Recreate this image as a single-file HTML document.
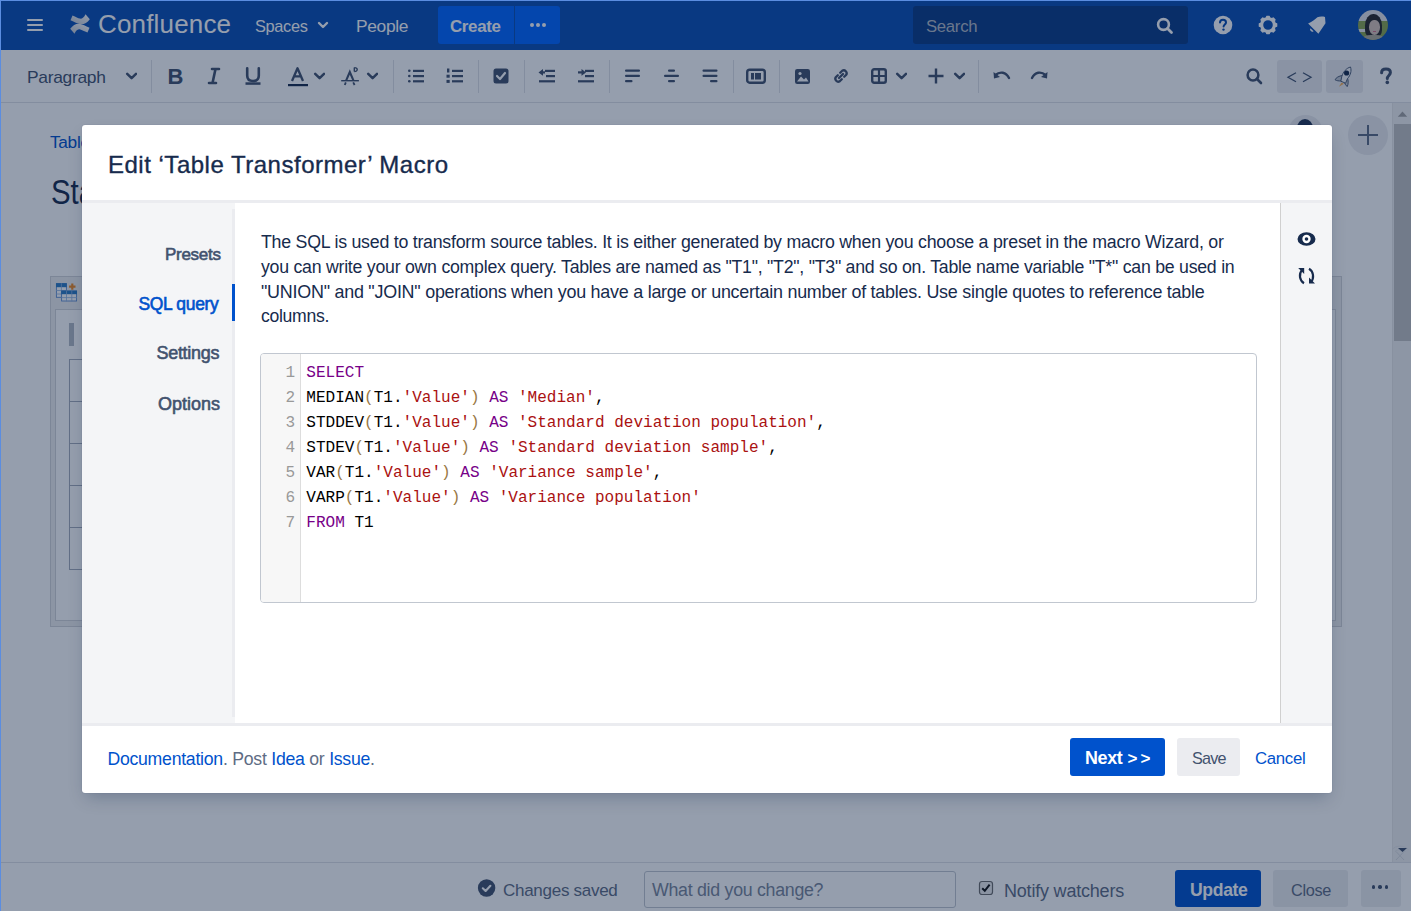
<!DOCTYPE html>
<html><head><meta charset="utf-8"><style>
html,body{margin:0;padding:0;width:1411px;height:911px;overflow:hidden;background:#fff;}
body{position:relative;font-family:"Liberation Sans", sans-serif;}
.t{position:absolute;white-space:pre;}
.r{position:absolute;box-sizing:border-box;}
</style></head><body>
<div class="r" style="left:0px;top:0px;width:1411px;height:50px;background:#0a4eb4;"></div>
<div class="r" style="left:27px;top:18.6px;width:16px;height:2.6px;background:#fff;border-radius:1.3px;"></div>
<div class="r" style="left:27px;top:23.6px;width:16px;height:2.6px;background:#fff;border-radius:1.3px;"></div>
<div class="r" style="left:27px;top:28.6px;width:16px;height:2.6px;background:#fff;border-radius:1.3px;"></div>
<svg class="r" style="left:69px;top:13px" width="22" height="22" viewBox="0 0 22 22"><defs><linearGradient id="lg1" x1="0" y1="1" x2="1" y2="0"><stop offset="0" stop-color="#c1c7d0"/><stop offset="1" stop-color="#fff"/></linearGradient></defs><path d="M1.2 15.8 C4 12 7.5 10 11 10.8 C13.5 11.4 16.5 13 20.5 14.8 L18.5 19.5 C15 18 13 16.8 11.2 16.4 C9 16 7 17.5 5.5 20.8 Z" fill="url(#lg1)"/><path d="M20.8 6.2 C18 10 14.5 12 11 11.2 C8.5 10.6 5.5 9 1.5 7.2 L3.5 2.5 C7 4 9 5.2 10.8 5.6 C13 6 15 4.5 16.5 1.2 Z" fill="url(#lg1)"/></svg>
<div class="t" style="left:98px;top:9px;font-family:'Liberation Sans', sans-serif;font-size:26px;line-height:30px;color:#fff;font-weight:400;letter-spacing:0.169px;">Confluence</div>
<div class="t" style="left:255px;top:17px;font-family:'Liberation Sans', sans-serif;font-size:16.38px;line-height:18px;color:#fff;font-weight:400;letter-spacing:-0.328px;">Spaces</div>
<svg class="r" style="left:316px;top:18px" width="14" height="14" viewBox="0 0 14 14"><path d="M3 5 L7 9 L11 5" stroke="#fff" stroke-width="2.4" fill="none" stroke-linecap="round" stroke-linejoin="round"/></svg>
<div class="t" style="left:356px;top:16px;font-family:'Liberation Sans', sans-serif;font-size:17.36px;line-height:20px;color:#fff;font-weight:400;letter-spacing:-0.319px;">People</div>
<div class="r" style="left:438px;top:6px;width:76px;height:38px;background:#0065ff;border-radius:3px 0 0 3px;"></div>
<div class="r" style="left:515px;top:6px;width:45px;height:38px;background:#0065ff;border-radius:0 3px 3px 0;"></div>
<div class="t" style="left:450px;top:17px;font-family:'Liberation Sans', sans-serif;font-size:16.89px;line-height:19px;color:#fff;font-weight:700;letter-spacing:-0.315px;">Create</div>
<div class="r" style="left:529.7px;top:23px;width:4px;height:4px;background:#fff;border-radius:50%;"></div>
<div class="r" style="left:535.9px;top:23px;width:4px;height:4px;background:#fff;border-radius:50%;"></div>
<div class="r" style="left:542.1px;top:23px;width:4px;height:4px;background:#fff;border-radius:50%;"></div>
<div class="r" style="left:913px;top:6px;width:275px;height:38px;background:rgba(9,30,66,0.4);border-radius:3px;"></div>
<div class="t" style="left:926px;top:17px;font-family:'Liberation Sans', sans-serif;font-size:16.76px;line-height:19px;color:#b3bac5;font-weight:400;letter-spacing:-0.313px;">Search</div>
<svg class="r" style="left:1153px;top:14px" width="24" height="24" viewBox="0 0 24 24"><circle cx="10.5" cy="10.5" r="5.4" stroke="#fff" stroke-width="2.6" fill="none"/><path d="M14.5 14.5 L18.5 18.5" stroke="#fff" stroke-width="2.8" stroke-linecap="round"/></svg>
<svg class="r" style="left:1212px;top:14px" width="22" height="22" viewBox="0 0 22 22"><circle cx="11" cy="11" r="9.3" fill="#fff"/><path d="M8 8.6 C8 6.8 9.3 5.8 11 5.8 C12.8 5.8 14 6.9 14 8.4 C14 10.4 11.6 10.6 11.6 12.6" stroke="#0049b0" stroke-width="2" fill="none" stroke-linecap="round"/><circle cx="11.5" cy="15.6" r="1.2" fill="#0049b0"/></svg>
<svg class="r" style="left:1257px;top:14px" width="22" height="22" viewBox="0 0 22 22"><g transform="translate(11 11)"><circle r="6.4" stroke="#fff" stroke-width="3.2" fill="none"/><rect x="-2" y="-9.3" width="4" height="3.5" rx="0.8" fill="#fff" transform="rotate(0)"/><rect x="-2" y="-9.3" width="4" height="3.5" rx="0.8" fill="#fff" transform="rotate(45)"/><rect x="-2" y="-9.3" width="4" height="3.5" rx="0.8" fill="#fff" transform="rotate(90)"/><rect x="-2" y="-9.3" width="4" height="3.5" rx="0.8" fill="#fff" transform="rotate(135)"/><rect x="-2" y="-9.3" width="4" height="3.5" rx="0.8" fill="#fff" transform="rotate(180)"/><rect x="-2" y="-9.3" width="4" height="3.5" rx="0.8" fill="#fff" transform="rotate(225)"/><rect x="-2" y="-9.3" width="4" height="3.5" rx="0.8" fill="#fff" transform="rotate(270)"/><rect x="-2" y="-9.3" width="4" height="3.5" rx="0.8" fill="#fff" transform="rotate(315)"/></g></svg>
<svg class="r" style="left:1306px;top:14px" width="22" height="22" viewBox="0 0 22 22"><path d="M2.1 9.5 C5.5 7.8 8.8 5.6 11.4 3.2 C13.6 2.2 16.8 2.3 19 2.9 L19.5 9.2 L12.4 19.7 Z" fill="#fff"/><path d="M4.4 14.3 A2.2 2.2 0 0 0 7.6 17.2 Z" fill="#fff"/></svg>
<div class="r" style="left:1358px;top:10px;width:30px;height:30px;border-radius:50%;overflow:hidden;background:linear-gradient(#e4e5e8 0 38%, #8ba54e 38% 100%);"><div class="r" style="left:0;top:19px;width:8px;height:3px;background:#e8e8e8;"></div><div class="r" style="left:7px;top:4px;width:17px;height:23px;border-radius:50% 50% 30% 30%;background:#2a2828;"></div><div class="r" style="left:10.5px;top:9.5px;width:11px;height:15px;border-radius:45% 45% 50% 50%;background:#d8c4b8;"></div><div class="r" style="left:14.5px;top:20.5px;width:3px;height:1.2px;background:#d07088;"></div><div class="r" style="left:4px;top:25px;width:23px;height:10px;border-radius:40%;background:#b0ab98;"></div></div>
<div class="r" style="left:0px;top:50px;width:1411px;height:53px;background:#fff;border-bottom:1px solid #dfe1e6;"></div>
<div class="t" style="left:27px;top:67px;font-family:'Liberation Sans', sans-serif;font-size:17.42px;line-height:20px;color:#42526e;font-weight:400;letter-spacing:-0.298px;">Paragraph</div>
<svg class="r" style="left:125px;top:70px" width="12" height="12" viewBox="0 0 12 12"><path d="M2.2 3.8 L6.6 8.2 L11 3.8" stroke="#42526e" stroke-width="2.5" fill="none" stroke-linecap="round" stroke-linejoin="round"/></svg>
<div class="r" style="left:151px;top:60px;width:1px;height:33px;background:#dfe1e6;"></div>
<div class="r" style="left:393px;top:60px;width:1px;height:33px;background:#dfe1e6;"></div>
<div class="r" style="left:478px;top:60px;width:1px;height:33px;background:#dfe1e6;"></div>
<div class="r" style="left:524px;top:60px;width:1px;height:33px;background:#dfe1e6;"></div>
<div class="r" style="left:609px;top:60px;width:1px;height:33px;background:#dfe1e6;"></div>
<div class="r" style="left:733px;top:60px;width:1px;height:33px;background:#dfe1e6;"></div>
<div class="r" style="left:779px;top:60px;width:1px;height:33px;background:#dfe1e6;"></div>
<div class="r" style="left:978px;top:60px;width:1px;height:33px;background:#dfe1e6;"></div>
<div class="t" style="left:167.5px;top:63.5px;font-family:'Liberation Sans', sans-serif;font-size:22px;line-height:25px;color:#42526e;font-weight:700;letter-spacing:0px;">B</div>
<svg class="r" style="left:206px;top:66px" width="16" height="20" viewBox="0 0 16 20"><path d="M6 3 L13 3 M3 17 L10 17 M9.5 3 L6.5 17" stroke="#42526e" stroke-width="2.6" fill="none" stroke-linecap="round"/></svg>
<svg class="r" style="left:243px;top:64px" width="20" height="24" viewBox="0 0 20 24"><path d="M4.2 4.2 L4.2 11.5 C4.2 15.3 6.6 17 10 17 C13.4 17 15.8 15.3 15.8 11.5 L15.8 4.2" stroke="#42526e" stroke-width="2.6" fill="none" stroke-linecap="round"/><rect x="2.5" y="18.3" width="15" height="2.5" fill="#42526e"/></svg>
<svg class="r" style="left:286px;top:63px" width="24" height="24" viewBox="0 0 24 24"><path d="M6 18 L11.5 5.2 L17 18 M8.2 13.3 L14.8 13.3" stroke="#42526e" stroke-width="2.3" fill="none" stroke-linejoin="round"/><rect x="2" y="21" width="20" height="2.2" fill="#172b4d"/></svg>
<svg class="r" style="left:313px;top:70px" width="12" height="12" viewBox="0 0 12 12"><path d="M2.2 3.8 L6.6 8.2 L11 3.8" stroke="#42526e" stroke-width="2.5" fill="none" stroke-linecap="round" stroke-linejoin="round"/></svg>
<svg class="r" style="left:339px;top:62px" width="22" height="24" viewBox="0 0 22 24"><path d="M7.2 18.4 L10.8 10 L14.4 18.4" stroke="#42526e" stroke-width="2.1" fill="none"/><path d="M15.3 5.6 L15.3 9.6 M15.3 5.6 C19.2 5.6 19.2 9.6 15.3 9.6" stroke="#42526e" stroke-width="1.4" fill="none"/><rect x="2.2" y="18" width="17.7" height="1.4" fill="#42526e"/><path d="M5.8 23 L6.8 20.4 M14.2 20.4 L15.6 23" stroke="#42526e" stroke-width="1.8"/></svg>
<svg class="r" style="left:366px;top:70px" width="12" height="12" viewBox="0 0 12 12"><path d="M2.2 3.8 L6.6 8.2 L11 3.8" stroke="#42526e" stroke-width="2.5" fill="none" stroke-linecap="round" stroke-linejoin="round"/></svg>
<svg class="r" style="left:406px;top:67px" width="20" height="18" viewBox="0 0 20 18"><g fill="#42526e"><rect x="2" y="2.5" width="2.6" height="2.6" rx="1.3"/><rect x="2" y="7.7" width="2.6" height="2.6" rx="1.3"/><rect x="2" y="12.9" width="2.6" height="2.6" rx="1.3"/><rect x="7" y="2.8" width="11" height="2.2"/><rect x="7" y="8" width="11" height="2.2"/><rect x="7" y="13.2" width="11" height="2.2"/></g></svg>
<svg class="r" style="left:445px;top:67px" width="20" height="18" viewBox="0 0 20 18"><g fill="#42526e"><rect x="2" y="1.5" width="2.4" height="4"/><rect x="1.5" y="7.7" width="3.2" height="3"/><rect x="1.5" y="12.9" width="3.2" height="3"/><rect x="7" y="2.8" width="11" height="2.2"/><rect x="7" y="8" width="11" height="2.2"/><rect x="7" y="13.2" width="11" height="2.2"/></g></svg>
<svg class="r" style="left:492px;top:67px" width="18" height="18" viewBox="0 0 18 18"><rect x="1.5" y="1.5" width="15" height="15" rx="2.5" fill="#42526e"/><path d="M5 9 L8 12 L13 6" stroke="#fff" stroke-width="2.2" fill="none" stroke-linecap="round" stroke-linejoin="round"/></svg>
<svg class="r" style="left:537px;top:67px" width="20" height="18" viewBox="0 0 20 18"><g fill="#42526e"><rect x="8" y="2.8" width="10" height="2.2"/><rect x="9" y="8" width="9" height="2.2"/><rect x="2" y="13.2" width="16" height="2.2"/><path d="M1.5 5.4 L6 2 L6 8.8 Z"/><rect x="4" y="4.3" width="4" height="2.2"/></g></svg>
<svg class="r" style="left:576px;top:67px" width="20" height="18" viewBox="0 0 20 18"><g fill="#42526e"><rect x="9" y="2.8" width="9" height="2.2"/><rect x="9" y="8" width="9" height="2.2"/><rect x="2" y="13.2" width="16" height="2.2"/><path d="M10 5.4 L5.5 2 L5.5 8.8 Z"/><rect x="2" y="4.3" width="4.5" height="2.2"/></g></svg>
<svg class="r" style="left:623px;top:67px" width="20" height="18" viewBox="0 0 20 18"><g fill="#42526e"><rect x="2" y="2.6" width="15" height="2.2" rx="1"/><rect x="2" y="7.8" width="15" height="2.2" rx="1"/><rect x="2" y="13" width="7.5" height="2.2" rx="1"/></g></svg>
<svg class="r" style="left:662px;top:67px" width="20" height="18" viewBox="0 0 20 18"><g fill="#42526e"><rect x="6" y="2.6" width="7" height="2.2" rx="1"/><rect x="2" y="7.8" width="15" height="2.2" rx="1"/><rect x="6" y="13" width="7" height="2.2" rx="1"/></g></svg>
<svg class="r" style="left:700px;top:67px" width="20" height="18" viewBox="0 0 20 18"><g fill="#42526e"><rect x="2.5" y="2.6" width="15" height="2.2" rx="1"/><rect x="2.5" y="7.8" width="15" height="2.2" rx="1"/><rect x="10" y="13" width="7.5" height="2.2" rx="1"/></g></svg>
<svg class="r" style="left:745px;top:67px" width="22" height="18" viewBox="0 0 22 18"><rect x="2.2" y="2.7" width="17.6" height="13" rx="2.5" stroke="#42526e" stroke-width="2.4" fill="none"/><rect x="6" y="6" width="3" height="6.5" fill="#42526e"/><rect x="10" y="6" width="6" height="6.5" fill="#42526e"/></svg>
<svg class="r" style="left:793px;top:66px" width="18" height="20" viewBox="0 0 18 20"><rect x="2" y="3" width="15" height="15" rx="2.2" fill="#42526e"/><path d="M4 15.5 L8 10.5 L11 13.5 L13 11.5 L15.5 15.5 Z" fill="#fff"/><circle cx="7" cy="7.5" r="1.6" fill="#fff"/></svg>
<svg class="r" style="left:831px;top:66px" width="20" height="20" viewBox="0 0 20 20"><path d="M8 12 L12 8 M6.8 9.2 L4.8 11.2 A2.9 2.9 0 0 0 8.8 15.2 L10.8 13.2 M9.2 6.8 L11.2 4.8 A2.9 2.9 0 0 1 15.2 8.8 L13.2 10.8" stroke="#42526e" stroke-width="2.3" fill="none" stroke-linecap="round"/></svg>
<svg class="r" style="left:870px;top:66px" width="18" height="20" viewBox="0 0 18 20"><rect x="2.2" y="3.2" width="13.6" height="13.6" rx="2" stroke="#42526e" stroke-width="2.4" fill="none"/><path d="M9 3 L9 17 M2 10 L16 10" stroke="#42526e" stroke-width="2.2"/></svg>
<svg class="r" style="left:895px;top:70px" width="12" height="12" viewBox="0 0 12 12"><path d="M2.2 3.8 L6.6 8.2 L11 3.8" stroke="#42526e" stroke-width="2.5" fill="none" stroke-linecap="round" stroke-linejoin="round"/></svg>
<svg class="r" style="left:927px;top:66px" width="18" height="20" viewBox="0 0 18 20"><path d="M9 2.5 L9 17.5 M1.5 10 L16.5 10" stroke="#42526e" stroke-width="2.4"/></svg>
<svg class="r" style="left:953px;top:70px" width="12" height="12" viewBox="0 0 12 12"><path d="M2.2 3.8 L6.6 8.2 L11 3.8" stroke="#42526e" stroke-width="2.5" fill="none" stroke-linecap="round" stroke-linejoin="round"/></svg>
<svg class="r" style="left:991px;top:66px" width="20" height="20" viewBox="0 0 20 20"><path d="M4.5 9 C9 5 15 6 18 12" stroke="#42526e" stroke-width="2.4" fill="none" stroke-linecap="round"/><path d="M2.5 6 L3 12.5 L9 11 Z" fill="#42526e"/></svg>
<svg class="r" style="left:1030px;top:66px" width="20" height="20" viewBox="0 0 20 20"><path d="M15.5 9 C11 5 5 6 2 12" stroke="#42526e" stroke-width="2.4" fill="none" stroke-linecap="round"/><path d="M17.5 6 L17 12.5 L11 11 Z" fill="#42526e"/></svg>
<svg class="r" style="left:1244px;top:66px" width="20" height="20" viewBox="0 0 20 20"><circle cx="9" cy="9" r="5.4" stroke="#42526e" stroke-width="2.5" fill="none"/><path d="M13 13 L17 17" stroke="#42526e" stroke-width="2.6" stroke-linecap="round"/></svg>
<div class="r" style="left:1277px;top:60px;width:45px;height:33px;background:#ebecf0;border-radius:3px;"></div>
<svg class="r" style="left:1285px;top:68px" width="30" height="16" viewBox="0 0 30 16"><path d="M11 4.8 L3 9.3 L11 13.8 M18 4.8 L26 9.3 L18 13.8" stroke="#42526e" stroke-width="1.3" fill="none"/></svg>
<div class="r" style="left:1326px;top:60px;width:37px;height:33px;background:#ebecf0;border-radius:3px;"></div>
<svg class="r" style="left:1333px;top:64px" width="24" height="24" viewBox="0 0 24 24"><path d="M8.6 18.4 L5.9 22.8 L11 19.8 Z" fill="#f6b15a"/><path d="M9.5 11.5 C6 12 3 13.5 2.1 15.8 C3.5 16.8 6 17 8.2 17 Z M14.4 14 C15.5 16.5 15.5 20 14.2 22.6 C13 21.5 12 20 11.5 18.8 Z" fill="#c1c7d0" stroke="#505f79" stroke-width="1" stroke-linejoin="round"/><path d="M17.5 3 C13.5 4 10.2 7.8 8.8 12.5 L7.8 17.2 L12.6 19.2 L14.4 14.8 C17.6 11 18.8 7 17.5 3 Z" fill="#f4f5f7" stroke="#505f79" stroke-width="1" stroke-linejoin="round"/><circle cx="13.6" cy="9" r="2.6" fill="#172b4d"/></svg>
<svg class="r" style="left:1378px;top:66px" width="16" height="20" viewBox="0 0 16 20"><path d="M3.6 6.8 C3.6 4.2 5.6 3 8 3 C10.6 3 12.4 4.4 12.4 6.6 C12.4 9.4 9.3 9.6 9.3 12.6" stroke="#42526e" stroke-width="3" fill="none" stroke-linecap="round"/><circle cx="9.3" cy="16.4" r="1.8" fill="#42526e"/></svg>
<div class="t" style="left:50px;top:132px;font-family:'Liberation Sans', sans-serif;font-size:17.25px;line-height:20px;color:#0052cc;font-weight:400;letter-spacing:-0.309px;">Table</div>
<div class="t" style="left:51px;top:172px;font-family:'Liberation Sans', sans-serif;font-size:35px;line-height:39px;color:#172b4d;font-weight:400;letter-spacing:0px;transform:scaleX(0.84);transform-origin:0 0;">Sta</div>
<div class="r" style="left:50px;top:276px;width:1292px;height:351px;background:#f0f0f0;border:1px solid #d3d5d9;"></div>
<svg class="r" style="left:52px;top:278px" width="30" height="28" viewBox="0 0 30 28"><rect x="4.4" y="5.6" width="10" height="13.7" fill="#fff" stroke="#5b8bd0" stroke-width="0.9"/><rect x="4" y="5.2" width="10.8" height="4" fill="#2d7bc4"/><path d="M9.4 5.2 L9.4 19.7 M4 12.5 L14.8 12.5 M4 16 L14.8 16" stroke="#8fb3de" stroke-width="0.8"/><rect x="9.6" y="13" width="15" height="10" fill="#fff" stroke="#5b8bd0" stroke-width="0.9"/><rect x="9.2" y="12.6" width="15.8" height="3.6" fill="#2d7bc4"/><path d="M14.5 12.6 L14.5 23.4 M19.8 12.6 L19.8 23.4 M9.2 19.6 L25 19.6" stroke="#8fb3de" stroke-width="0.8"/><path d="M20.3 5.4 L20.3 11.8 M17.1 8.6 L23.5 8.6" stroke="#f08a24" stroke-width="2.2"/></svg>
<div class="r" style="left:55px;top:309px;width:1281px;height:312px;background:#fff;border:1px solid #d3d5d9;"></div>
<div class="r" style="left:69px;top:323px;width:5px;height:23px;background:#b3bac5;"></div>
<div class="r" style="left:69px;top:359px;width:1240px;height:43px;border:1px solid #a5adba;background:#fff;"></div>
<div class="r" style="left:69px;top:401px;width:1240px;height:43px;border:1px solid #a5adba;background:#fff;"></div>
<div class="r" style="left:69px;top:443px;width:1240px;height:43px;border:1px solid #a5adba;background:#fff;"></div>
<div class="r" style="left:69px;top:485px;width:1240px;height:43px;border:1px solid #a5adba;background:#fff;"></div>
<div class="r" style="left:69px;top:527px;width:1240px;height:43px;border:1px solid #a5adba;background:#fff;"></div>
<div class="r" style="left:1348px;top:115px;width:40px;height:40px;background:#ebecf0;border-radius:50%;"></div>
<div class="r" style="left:1358px;top:134px;width:20px;height:2px;background:#5e6c84;"></div>
<div class="r" style="left:1367px;top:125px;width:2px;height:20px;background:#5e6c84;"></div>
<div class="r" style="left:1392px;top:103px;width:19px;height:759px;background:#f1f1f1;border-left:1px solid #e8e8e8;"></div>
<div class="r" style="left:1394px;top:124px;width:17px;height:217px;background:#c1c1c1;"></div>
<svg class="r" style="left:1396px;top:108px" width="12" height="12" viewBox="0 0 12 12"><path d="M1.8 8.8 L6.5 3.6 L11.2 8.8 Z" fill="#a3a3a3"/></svg>
<svg class="r" style="left:1390px;top:840px" width="21" height="22" viewBox="0 0 21 22"><path d="M2.2 9.5 C6 5 14 5 18.5 9.5 M5 11.5 C8 9 12.5 9 15.5 11.5" stroke="#dfe1e6" stroke-width="1" fill="none" opacity="0.7"/><path d="M6 20 L14 11.5 M6 11.5 L14 20" stroke="#d0d4da" stroke-width="1" opacity="0.7"/><path d="M8 8 L17 8 L12.5 12 Z" fill="#42526e"/></svg>
<div class="r" style="left:0px;top:862px;width:1411px;height:49px;background:#fff;border-top:1px solid #dfe1e6;"></div>
<svg class="r" style="left:477px;top:879px" width="19" height="19" viewBox="0 0 19 19"><circle cx="9.6" cy="9" r="8.7" fill="#42526e"/><path d="M5.8 9.3 L8.6 12 L13.4 6.8" stroke="#fff" stroke-width="2.1" fill="none" stroke-linecap="round" stroke-linejoin="round"/></svg>
<div class="t" style="left:503px;top:881px;font-family:'Liberation Sans', sans-serif;font-size:17.05px;line-height:19px;color:#5e6c84;font-weight:400;letter-spacing:-0.294px;">Changes saved</div>
<div class="r" style="left:644px;top:871px;width:312px;height:37px;background:#fff;border:1px solid #c1c7d0;border-radius:3px;"></div>
<div class="t" style="left:652px;top:880px;font-family:'Liberation Sans', sans-serif;font-size:17.77px;line-height:20px;color:#7a869a;font-weight:400;letter-spacing:-0.279px;">What did you change?</div>
<svg class="r" style="left:978px;top:880px" width="16" height="16" viewBox="0 0 16 16"><rect x="1.5" y="1.5" width="13" height="13" rx="2.5" fill="#ececec" stroke="#6b6b6b" stroke-width="1.2"/><path d="M4.2 8.2 L6.8 10.8 L11.6 4.6" stroke="#111" stroke-width="2" fill="none"/></svg>
<div class="t" style="left:1004px;top:881px;font-family:'Liberation Sans', sans-serif;font-size:18px;line-height:20px;color:#5e6c84;font-weight:400;letter-spacing:-0.203px;">Notify watchers</div>
<div class="r" style="left:1175px;top:870px;width:86px;height:37px;background:#0052cc;border-radius:3px;"></div>
<div class="t" style="left:1190px;top:880px;font-family:'Liberation Sans', sans-serif;font-size:17.63px;line-height:20px;color:#fff;font-weight:700;letter-spacing:-0.353px;">Update</div>
<div class="r" style="left:1273px;top:870px;width:75px;height:37px;background:rgba(9,30,66,0.08);border-radius:3px;"></div>
<div class="t" style="left:1291px;top:881px;font-family:'Liberation Sans', sans-serif;font-size:16.29px;line-height:18px;color:#5e6c84;font-weight:400;letter-spacing:-0.312px;">Close</div>
<div class="r" style="left:1361px;top:870px;width:40px;height:37px;background:rgba(9,30,66,0.08);border-radius:3px;"></div>
<div class="r" style="left:1371.8999999999999px;top:885.2px;width:3.4px;height:3.4px;background:#42526e;border-radius:50%;"></div>
<div class="r" style="left:1378.2px;top:885.2px;width:3.4px;height:3.4px;background:#42526e;border-radius:50%;"></div>
<div class="r" style="left:1384.5px;top:885.2px;width:3.4px;height:3.4px;background:#42526e;border-radius:50%;"></div>
<div class="r" style="left:1288px;top:115px;width:35px;height:35px;background:#ebecf0;border-radius:50%;"></div>
<div class="r" style="left:1296.5px;top:118.7px;width:16px;height:18px;background:#253858;border-radius:50%;"></div>
<div class="r" style="left:0px;top:0px;width:1411px;height:911px;background:rgba(9,30,66,0.43);"></div>
<div class="r" style="left:0px;top:0px;width:1411px;height:1px;background:#5b8de0;"></div>
<div class="r" style="left:0px;top:0px;width:1px;height:911px;background:#5b8de0;"></div>
<div class="r" style="left:82px;top:125px;width:1250px;height:668px;background:#fff;border-radius:3px;box-shadow:0 8px 16px -4px rgba(9,30,66,0.25),0 0 1px rgba(9,30,66,0.31);"></div>
<div class="t" style="left:108px;top:151px;font-family:'Liberation Sans', sans-serif;font-size:24px;line-height:27px;color:#172b4d;font-weight:400;letter-spacing:0.503px;-webkit-text-stroke:0.35px currentColor;">Edit ‘Table Transformer’ Macro</div>
<div class="r" style="left:82px;top:200px;width:1250px;height:3px;background:#ebecf0;"></div>
<div class="r" style="left:82px;top:203px;width:153px;height:520px;background:#f4f5f7;"></div>
<div class="r" style="left:232px;top:209px;width:3px;height:508px;background:#ebecf0;"></div>
<div class="r" style="left:232px;top:284px;width:3px;height:37px;background:#0052cc;"></div>
<div class="t" style="left:165px;top:245px;font-family:'Liberation Sans', sans-serif;font-size:17.0px;line-height:19px;color:#42526e;font-weight:400;letter-spacing:-0.284px;-webkit-text-stroke:0.6px currentColor;">Presets</div>
<div class="t" style="left:138.5px;top:294px;font-family:'Liberation Sans', sans-serif;font-size:17.47px;line-height:20px;color:#0052cc;font-weight:400;letter-spacing:-0.313px;-webkit-text-stroke:0.6px currentColor;">SQL query</div>
<div class="t" style="left:156.5px;top:343px;font-family:'Liberation Sans', sans-serif;font-size:17.97px;line-height:20px;color:#42526e;font-weight:400;letter-spacing:-0.278px;-webkit-text-stroke:0.6px currentColor;">Settings</div>
<div class="t" style="left:158px;top:394px;font-family:'Liberation Sans', sans-serif;font-size:18px;line-height:20px;color:#42526e;font-weight:400;letter-spacing:-0.006px;-webkit-text-stroke:0.6px currentColor;">Options</div>
<div class="r" style="left:1280px;top:203px;width:52px;height:520px;background:#f4f5f7;border-left:1px solid #d0d0d0;"></div>
<svg class="r" style="left:1297px;top:231px" width="19" height="16" viewBox="0 0 19 16"><ellipse cx="9.5" cy="8" rx="9" ry="6.8" fill="#172b4d"/><circle cx="9.5" cy="8" r="4.2" fill="#fff"/><circle cx="9.5" cy="8" r="1.8" fill="#172b4d"/></svg>
<svg class="r" style="left:1297px;top:267px" width="19" height="18" viewBox="0 0 19 18"><path d="M7 16.2 C2.6 13.8 1.4 7 5.2 2.6" stroke="#172b4d" stroke-width="2.2" fill="none"/><path d="M1.2 1 L7.2 1 L7.2 7 Z" fill="#172b4d"/><path d="M12 1.8 C16.4 4.2 17.6 11 13.8 15.4" stroke="#172b4d" stroke-width="2.2" fill="none"/><path d="M18 16.6 L12 16.6 L12 10.6 Z" fill="#172b4d"/></svg>
<div class="t" style="left:261px;top:232px;font-family:'Liberation Sans', sans-serif;font-size:17.78px;line-height:20px;color:#172b4d;font-weight:400;letter-spacing:-0.243px;">The SQL is used to transform source tables. It is either generated by macro when you choose a preset in the macro Wizard, or</div>
<div class="t" style="left:261px;top:257px;font-family:'Liberation Sans', sans-serif;font-size:17.72px;line-height:20px;color:#172b4d;font-weight:400;letter-spacing:-0.243px;">you can write your own complex query. Tables are named as "T1", "T2", "T3" and so on. Table name variable "T*" can be used in</div>
<div class="t" style="left:261px;top:282px;font-family:'Liberation Sans', sans-serif;font-size:17.93px;line-height:20px;color:#172b4d;font-weight:400;letter-spacing:-0.247px;">"UNION" and "JOIN" operations when you have a large or uncertain number of tables. Use single quotes to reference table</div>
<div class="t" style="left:261px;top:306px;font-family:'Liberation Sans', sans-serif;font-size:17.61px;line-height:20px;color:#172b4d;font-weight:400;letter-spacing:-0.298px;">columns.</div>
<div class="r" style="left:260px;top:353px;width:997px;height:250px;background:#fff;border:1px solid #c1c7d0;border-radius:4px;"></div>
<div class="r" style="left:261px;top:354px;width:40px;height:248px;background:#f7f7f7;border-right:1px solid #ddd;border-radius:3px 0 0 3px;"></div>
<div class="t" style="right:1116px;top:364px;font-family:'Liberation Mono', monospace;font-size:16.04px;line-height:18px;color:#999;font-weight:400;letter-spacing:0px;">1</div>
<div class="t" style="left:306.3px;top:364px;font-family:'Liberation Mono', monospace;font-size:16.04px;line-height:18px;color:#000;font-weight:400;letter-spacing:0px;"><span style="color:#770088">SELECT</span></div>
<div class="t" style="right:1116px;top:389px;font-family:'Liberation Mono', monospace;font-size:16.04px;line-height:18px;color:#999;font-weight:400;letter-spacing:0px;">2</div>
<div class="t" style="left:306.3px;top:389px;font-family:'Liberation Mono', monospace;font-size:16.04px;line-height:18px;color:#000;font-weight:400;letter-spacing:0px;"><span style="color:#000">MEDIAN</span><span style="color:#997744">(</span><span style="color:#000">T1.</span><span style="color:#aa1111">'Value'</span><span style="color:#997744">)</span><span style="color:#000"> </span><span style="color:#770088">AS</span><span style="color:#000"> </span><span style="color:#aa1111">'Median'</span><span style="color:#000">,</span></div>
<div class="t" style="right:1116px;top:414px;font-family:'Liberation Mono', monospace;font-size:16.04px;line-height:18px;color:#999;font-weight:400;letter-spacing:0px;">3</div>
<div class="t" style="left:306.3px;top:414px;font-family:'Liberation Mono', monospace;font-size:16.04px;line-height:18px;color:#000;font-weight:400;letter-spacing:0px;"><span style="color:#000">STDDEV</span><span style="color:#997744">(</span><span style="color:#000">T1.</span><span style="color:#aa1111">'Value'</span><span style="color:#997744">)</span><span style="color:#000"> </span><span style="color:#770088">AS</span><span style="color:#000"> </span><span style="color:#aa1111">'Standard deviation population'</span><span style="color:#000">,</span></div>
<div class="t" style="right:1116px;top:439px;font-family:'Liberation Mono', monospace;font-size:16.04px;line-height:18px;color:#999;font-weight:400;letter-spacing:0px;">4</div>
<div class="t" style="left:306.3px;top:439px;font-family:'Liberation Mono', monospace;font-size:16.04px;line-height:18px;color:#000;font-weight:400;letter-spacing:0px;"><span style="color:#000">STDEV</span><span style="color:#997744">(</span><span style="color:#000">T1.</span><span style="color:#aa1111">'Value'</span><span style="color:#997744">)</span><span style="color:#000"> </span><span style="color:#770088">AS</span><span style="color:#000"> </span><span style="color:#aa1111">'Standard deviation sample'</span><span style="color:#000">,</span></div>
<div class="t" style="right:1116px;top:464px;font-family:'Liberation Mono', monospace;font-size:16.04px;line-height:18px;color:#999;font-weight:400;letter-spacing:0px;">5</div>
<div class="t" style="left:306.3px;top:464px;font-family:'Liberation Mono', monospace;font-size:16.04px;line-height:18px;color:#000;font-weight:400;letter-spacing:0px;"><span style="color:#000">VAR</span><span style="color:#997744">(</span><span style="color:#000">T1.</span><span style="color:#aa1111">'Value'</span><span style="color:#997744">)</span><span style="color:#000"> </span><span style="color:#770088">AS</span><span style="color:#000"> </span><span style="color:#aa1111">'Variance sample'</span><span style="color:#000">,</span></div>
<div class="t" style="right:1116px;top:489px;font-family:'Liberation Mono', monospace;font-size:16.04px;line-height:18px;color:#999;font-weight:400;letter-spacing:0px;">6</div>
<div class="t" style="left:306.3px;top:489px;font-family:'Liberation Mono', monospace;font-size:16.04px;line-height:18px;color:#000;font-weight:400;letter-spacing:0px;"><span style="color:#000">VARP</span><span style="color:#997744">(</span><span style="color:#000">T1.</span><span style="color:#aa1111">'Value'</span><span style="color:#997744">)</span><span style="color:#000"> </span><span style="color:#770088">AS</span><span style="color:#000"> </span><span style="color:#aa1111">'Variance population'</span></div>
<div class="t" style="right:1116px;top:514px;font-family:'Liberation Mono', monospace;font-size:16.04px;line-height:18px;color:#999;font-weight:400;letter-spacing:0px;">7</div>
<div class="t" style="left:306.3px;top:514px;font-family:'Liberation Mono', monospace;font-size:16.04px;line-height:18px;color:#000;font-weight:400;letter-spacing:0px;"><span style="color:#770088">FROM</span><span style="color:#000"> T1</span></div>
<div class="r" style="left:82px;top:723px;width:1250px;height:3px;background:#ebecf0;"></div>
<div class="t" style="left:107.4px;top:749px;font-family:'Liberation Sans', sans-serif;font-size:17.66px;line-height:20px;color:#5e6c84;font-weight:400;letter-spacing:-0.249px;"><span style="color:#0052cc">Documentation</span>. Post <span style="color:#0052cc">Idea</span> or <span style="color:#0052cc">Issue</span>.</div>
<div class="r" style="left:1070px;top:738px;width:95px;height:38px;background:#0052cc;border-radius:3px;"></div>
<div class="t" style="left:1085px;top:748px;font-family:'Liberation Sans', sans-serif;font-size:17.91px;line-height:20px;color:#fff;font-weight:700;letter-spacing:-0.378px;">Next</div>
<div class="t" style="left:1127.5px;top:749px;font-family:'Liberation Sans', sans-serif;font-size:17px;line-height:19px;color:#fff;font-weight:700;letter-spacing:0px;">&gt;</div>
<div class="t" style="left:1140.5px;top:749px;font-family:'Liberation Sans', sans-serif;font-size:17px;line-height:19px;color:#fff;font-weight:700;letter-spacing:0px;">&gt;</div>
<div class="r" style="left:1177px;top:738px;width:63px;height:38px;background:#ebecf0;border-radius:3px;"></div>
<div class="t" style="left:1192px;top:749px;font-family:'Liberation Sans', sans-serif;font-size:16.2px;line-height:18px;color:#42526e;font-weight:400;letter-spacing:-0.772px;">Save</div>
<div class="t" style="left:1255px;top:749px;font-family:'Liberation Sans', sans-serif;font-size:16.79px;line-height:19px;color:#0052cc;font-weight:400;letter-spacing:-0.308px;">Cancel</div>
</body></html>
